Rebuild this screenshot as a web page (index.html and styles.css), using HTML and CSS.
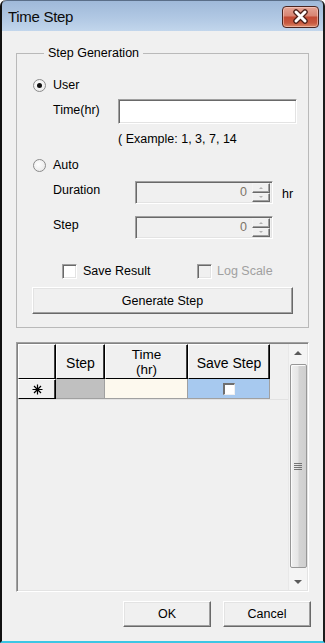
FILE: index.html
```html
<!DOCTYPE html>
<html>
	<head>
		<meta charset="utf-8" />
		<title>Time Step</title>
		<link rel="stylesheet" href="styles.css">
	</head>
	<body>
		<div class="window">
			<div class="titlebar">
				<span class="title">Time Step</span>
				<span class="close">
					<svg width="19" height="15" viewBox="0 0 19 15">
						<path d="M5 3 L14 12 M14 3 L5 12" stroke="#4b2019" stroke-width="5.5" stroke-linecap="round" fill="none"/>
						<path d="M5 3 L14 12 M14 3 L5 12" stroke="#fff" stroke-width="3" stroke-linecap="round" fill="none"/>
					</svg>
				</span>
			</div>
			<div class="client">
				<fieldset class="group">
					<legend>Step Generation</legend>
					<div class="row r-user"><span class="radio checked"></span><span>User</span></div>
					<div class="row r-time"><span class="label label-time">Time(hr)</span><span class="textbox"></span></div>
					<div class="row r-hint">( Example: 1, 3, 7, 14</div>
					<div class="row r-auto"><span class="radio"></span><span>Auto</span></div>
					<div class="row r-dur">
						<span class="label label-wide">Duration</span>
						<span class="spin"><span class="spin-value">0</span><span class="spin-btns"><span class="spin-up"></span><span class="spin-down"></span></span></span>
						<span class="unit">hr</span>
					</div>
					<div class="row r-step">
						<span class="label label-wide">Step</span>
						<span class="spin"><span class="spin-value">0</span><span class="spin-btns"><span class="spin-up"></span><span class="spin-down"></span></span></span>
					</div>
					<div class="row r-checks">
						<span class="check-item first"><span class="checkbox"></span><span>Save Result</span></span>
						<span class="check-item disabled"><span class="checkbox"></span><span>Log Scale</span></span>
					</div>
					<div class="row r-button"><span class="button generate">Generate Step</span></div>
				</fieldset>

				<div class="grid">
					<div class="grid-table">
						<div class="grid-head">
							<span class="cell head c-row"></span>
							<span class="cell head c-step">Step</span>
							<span class="cell head c-time"><span class="two-line">Time<br>(hr)</span></span>
							<span class="cell head c-save">Save Step</span>
						</div>
						<div class="grid-row">
							<span class="cell head c-row">
								<svg width="11" height="11" viewBox="0 0 11 11">
									<path d="M5.5 0.5 V10.5 M0.5 5.5 H10.5 M2 2 L9 9 M9 2 L2 9" stroke="#000" stroke-width="1.2" fill="none"/>
								</svg>
							</span>
							<span class="cell data c-step d-step"></span>
							<span class="cell data c-time d-time"></span>
							<span class="cell data c-save d-save"><span class="cell-check"></span></span>
						</div>
						<div class="grid-empty"></div>
					</div>
					<div class="scrollbar">
						<span class="arrow up"></span>
						<span class="thumb"><span class="grip"></span></span>
						<span class="arrow down"></span>
					</div>
				</div>

				<div class="actions">
					<span class="button action">OK</span>
					<span class="button action">Cancel</span>
				</div>
			</div>
		</div>
	</body>
</html>
```

FILE: styles.css
```css
* {
	box-sizing: border-box;
}

body {
	margin: 0;
	background-color: #fff;
	font-family: "Liberation Sans", Arial, sans-serif;
	color: #000;
}

.window {
	width: 325px;
	height: 643px;
	display: flex;
	flex-direction: column;
	background-color: #f0f0f0;
	border-left: 2px solid #111;
	border-right: 2px solid #1c1c1c;
	border-bottom: 2px solid #3cc6e4;
	border-radius: 6px 6px 0 0;
}

/* title bar */
.titlebar {
	height: 31px;
	flex: none;
	display: flex;
	align-items: center;
	justify-content: space-between;
	padding: 0 4px 0 6px;
	background: linear-gradient(#9fb9d9, #b2c9e4 60%, #c2d6ec);
	border-top: 1px solid #5a6e88;
	border-radius: 5px 5px 0 0;
}

.title {
	font-size: 15px;
	letter-spacing: -0.3px;
	color: #0b0b0b;
	margin-top: 1px;
}

.close {
	width: 37px;
	height: 22px;
	margin-top: 1px;
	display: flex;
	align-items: center;
	justify-content: center;
	border: 1px solid #4a2520;
	border-radius: 4px;
	background: linear-gradient(#e4a596, #d88472 45%, #c24a34 50%, #c85a40 80%, #dc8a6a);
	box-shadow: inset 0 0 0 1px rgba(255, 220, 210, 0.5);
}

/* client area */
.client {
	flex: 1;
	display: flex;
	flex-direction: column;
	padding: 0 14px;
}

.group {
	margin: 15px 0 0;
	padding: 0 0 13px 16px;
	border: 1px solid #b9b9b9;
	min-width: 0;
}

.group legend {
	margin-left: 11px;
	padding: 0 4px;
	font-size: 12.5px;
	line-height: 14px;
}

.row {
	display: flex;
	align-items: center;
	font-size: 12.5px;
}

.r-user {
	height: 16px;
	margin-top: 17px;
}

.r-time {
	height: 25px;
	margin-top: 6px;
	padding-left: 20px;
}

.r-hint {
	height: 14px;
	margin-top: 8px;
	padding-left: 85px;
}

.r-auto {
	height: 16px;
	margin-top: 11px;
}

.r-dur {
	height: 23px;
	margin-top: 8px;
	padding-left: 20px;
}

.r-step {
	height: 23px;
	margin-top: 12px;
	padding-left: 20px;
}

.r-checks {
	height: 16px;
	margin-top: 24px;
	padding-left: 29px;
}

.r-button {
	height: 27px;
	margin-top: 8px;
}

.label-time {
	width: 65px;
	margin-top: -4px;
}

.label-wide {
	width: 82px;
	margin-top: -5px;
}

.radio {
	width: 13px;
	height: 13px;
	margin-right: 7px;
	border-radius: 50%;
	border: 1px solid #8b8b8b;
	background: radial-gradient(circle at 40% 40%, #fff, #e4e4e4);
	display: flex;
	align-items: center;
	justify-content: center;
}

.radio.checked::after {
	content: "";
	width: 5px;
	height: 5px;
	border-radius: 50%;
	background-color: #111;
}

.textbox {
	width: 179px;
	height: 25px;
	background-color: #fff;
	border: 1px solid #fff;
	border-top-color: #a0a0a0;
	border-left-color: #a0a0a0;
	box-shadow: inset 1px 1px 0 #696969, inset -1px -1px 0 #e3e3e3;
}

.spin {
	width: 138px;
	height: 23px;
	display: flex;
	align-items: center;
	justify-content: flex-end;
	padding: 1px 2px 1px 1px;
	border: 1px solid #fff;
	border-top-color: #a0a0a0;
	border-left-color: #a0a0a0;
	box-shadow: inset 1px 1px 0 #696969, inset -1px -1px 0 #e3e3e3;
}

.spin-value {
	color: #7d7468;
	margin-right: 5px;
	margin-top: -1px;
}

.spin-btns {
	width: 18px;
	height: 19px;
	display: flex;
	flex-direction: column;
}

.spin-up,
.spin-down {
	flex: 1;
	display: flex;
	align-items: center;
	justify-content: center;
	background-color: #f0f0f0;
	border: 1px solid #f4f4f4;
	border-right-color: #696969;
	border-bottom-color: #696969;
	box-shadow: inset -1px -1px 0 #a0a0a0;
}

.spin-up::after {
	content: "";
	border: 2px solid transparent;
	border-top: none;
	border-bottom: 2px solid #b0b0b0;
}

.spin-down::after {
	content: "";
	border: 2px solid transparent;
	border-bottom: none;
	border-top: 2px solid #b0b0b0;
}

.unit {
	margin-left: 9px;
	margin-top: 3px;
}

.check-item {
	display: flex;
	align-items: center;
}

.check-item.first {
	width: 135px;
}

.checkbox {
	width: 15px;
	height: 15px;
	margin-right: 6px;
	background-color: #fff;
	border: 1px solid #fff;
	border-top-color: #a0a0a0;
	border-left-color: #a0a0a0;
	box-shadow: inset 1px 1px 0 #696969, inset -1px -1px 0 #e3e3e3;
}

.check-item.disabled {
	color: #a0a0a0;
}

.check-item.disabled .checkbox {
	background-color: #f0f0f0;
	margin-right: 5px;
}

.button {
	display: flex;
	align-items: center;
	justify-content: center;
	font-size: 12.5px;
	background-color: #f0f0f0;
	border: 1px solid #fff;
	border-right-color: #696969;
	border-bottom-color: #696969;
	box-shadow: inset -1px -1px 0 #a0a0a0, inset 1px 1px 0 #e3e3e3;
}

.generate {
	width: 261px;
	height: 27px;
	margin-left: -1px;
}

/* data grid */
.grid {
	height: 250px;
	margin-top: 14px;
	flex: none;
	display: flex;
	border: 1px solid #fff;
	border-top-color: #a0a0a0;
	border-left-color: #a0a0a0;
	box-shadow: inset 1px 1px 0 #828282, inset -1px -1px 0 #e3e3e3;
	padding: 1px;
}

.grid-table {
	flex: 1;
	display: flex;
	flex-direction: column;
}

.grid-head {
	height: 35px;
	display: flex;
}

.grid-row {
	height: 20px;
	display: flex;
}

.grid-empty {
	flex: 1;
	border-top: 1px solid #e2e2e2;
}

.cell {
	display: flex;
	align-items: center;
	justify-content: center;
	text-align: center;
	font-size: 14px;
	line-height: 16px;
}

.two-line {
	font-size: 13.5px;
	line-height: 14.5px;
}

.cell.head {
	background-color: #f0f0f0;
	border: 1px solid #fff;
	border-right-color: #000;
	border-bottom-color: #000;
	box-shadow: inset -1px 0 0 #404040;
}

.grid-head .cell {
	padding-top: 2px;
}

.c-row {
	width: 38px;
}

.c-step {
	width: 49px;
}

.c-time {
	width: 83px;
}

.c-save {
	width: 82px;
}

.cell.data {
	border-right: 1px solid #a0a0a0;
	border-bottom: 1px solid #a0a0a0;
}

.d-step {
	background-color: #c0c0c0;
}

.d-time {
	background-color: #fdf9ee;
}

.d-save {
	background-color: #a7c9ef;
}

.cell-check {
	width: 12px;
	height: 12px;
	background-color: #fff;
	border: 1px solid #f0f0f0;
	border-top: 2px solid #6f6f6f;
	border-left: 2px solid #6f6f6f;
}

.scrollbar {
	width: 19px;
	display: flex;
	flex-direction: column;
	align-items: center;
	background-color: #f4f4f4;
	border-left: 1px solid #e8e8e8;
}

.arrow {
	height: 17px;
	width: 17px;
	display: flex;
	align-items: center;
	justify-content: center;
	flex: none;
}

.arrow.up::after {
	content: "";
	border: 4px solid transparent;
	border-top: none;
	border-bottom: 4px solid #5a5a5a;
}

.arrow.down::after {
	content: "";
	border: 4px solid transparent;
	border-bottom: none;
	border-top: 4px solid #5a5a5a;
}

.thumb {
	width: 17px;
	height: 204px;
	margin-top: 3px;
	display: flex;
	align-items: center;
	justify-content: center;
	border: 1px solid #979797;
	border-radius: 2px;
	background: linear-gradient(90deg, #f0f0f0, #e6e6e6 45%, #d4d4d4 55%, #cfcfcf);
	box-shadow: inset 1px 1px 0 #fbfbfb;
}

.grip {
	width: 8px;
	height: 7px;
	margin-top: 1px;
	background: repeating-linear-gradient(#5a5a5a 0 1px, transparent 1px 2px);
	opacity: 0.8;
}

.scrollbar .down {
	margin-top: auto;
}

.actions {
	display: flex;
	justify-content: flex-end;
	gap: 12px;
	margin-top: 9px;
	margin-right: -2px;
}

.action {
	width: 88px;
	height: 26px;
}
```
